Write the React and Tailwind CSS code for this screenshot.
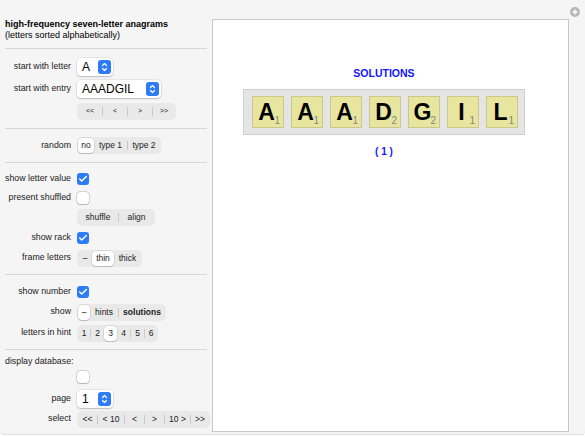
import { Check } from 'lucide-react'

const font = { fontFamily: '"Liberation Sans", Arial, sans-serif' }

function Row({ label, children, className = 'h-[20px]' }) {
  return (
    <div className={`flex items-center ${className}`}>
      <div className="w-[77px] shrink-0 pr-[6px] text-right text-[8.8px] text-[#222] whitespace-nowrap">{label}</div>
      <div className="flex items-center">{children}</div>
    </div>
  )
}

function Sep({ className = '' }) {
  return <div className={`h-px bg-[#d6d6d6] mx-[5px] ${className}`} />
}

function Popup({ value, width }) {
  return (
    <div
      className="flex items-center justify-between h-[18px] rounded-[4px] bg-white shadow-[0_0_0_0.5px_rgba(0,0,0,0.12),0_1px_1.5px_rgba(0,0,0,0.18)] pl-[5px] pr-[2px]"
      style={{ width }}
    >
      <span className="text-[12px] text-black leading-none">{value}</span>
      <div className="w-[13px] h-[14px] rounded-[3px] bg-[#2b7cf6] flex items-center justify-center">
        <svg width="7" height="10" viewBox="0 0 7 10" fill="none" stroke="white" strokeWidth="1.2" strokeLinecap="round" strokeLinejoin="round">
          <path d="M1.5 3.5 L3.5 1.5 L5.5 3.5" />
          <path d="M1.5 6.5 L3.5 8.5 L5.5 6.5" />
        </svg>
      </div>
    </div>
  )
}

function Seg({ items, selected, bold, widths, textSize = 'text-[8.5px]' }) {
  return (
    <div className="flex items-center h-[17px] rounded-[5px] bg-[#e9e9e9] px-[1px]">
      {items.map((it, i) => {
        const sel = i === selected
        const prevSel = i - 1 === selected
        return (
          <div key={i} className="flex items-center h-full">
            {i > 0 && !sel && !prevSel && <div className="w-px h-[9px] bg-[#c9c9c9]" />}
            <div
              className={`h-[15px] flex items-center justify-center ${textSize} text-[#222] rounded-[4px] ${
                sel ? 'bg-white shadow-[0_0_0_0.5px_rgba(0,0,0,0.15),0_1px_1px_rgba(0,0,0,0.15)]' : ''
              } ${bold === i ? 'font-bold' : ''}`}
              style={{ width: widths[i] }}
            >
              {it}
            </div>
          </div>
        )
      })}
    </div>
  )
}

function Box({ checked }) {
  return checked ? (
    <div className="w-[12px] h-[12px] rounded-[3px] bg-[#2b7cf6] flex items-center justify-center">
      <Check size={10} color="white" strokeWidth={3.5} />
    </div>
  ) : (
    <div className="w-[12px] h-[12px] rounded-[3px] bg-white shadow-[0_0_0_0.5px_rgba(0,0,0,0.25),0_0.5px_1px_rgba(0,0,0,0.15)]" />
  )
}

const tiles = [
  ['A', 1], ['A', 1], ['A', 1], ['D', 2], ['G', 2], ['I', 1], ['L', 1],
]

function Tile({ letter, value }) {
  return (
    <div className="relative w-[32px] h-[32px] bg-[#e8e69e] border border-[#cbc98a] flex items-center justify-center">
      <span className="text-[23px] font-bold text-black leading-none -ml-[3px] mt-[2px]">{letter}</span>
      <span className="absolute right-[3px] bottom-[1px] text-[10px] text-[#858585] leading-none">{value}</span>
    </div>
  )
}

export default function App() {
  return (
    <div className="w-[585px] h-[437px] bg-white" style={font}>
      <div className="relative w-[585px] h-[435px] bg-[#f5f5f5] border-b border-[#e2e2e2] rounded-b-[4px] flex">
        {/* controls */}
        <div className="w-[212px] shrink-0">
          <div className="pt-[19px] px-[5px] text-[9px] leading-[11px] text-black">
            <div className="font-bold">high-frequency seven-letter anagrams</div>
            <div>(letters sorted alphabetically)</div>
          </div>
          <Sep className="mt-[7px]" />

          <div className="mt-[8px] flex flex-col gap-[2px]">
            <Row label="start with letter">
              <Popup value="A" width={36} />
            </Row>
            <Row label="start with entry">
              <Popup value="AAADGIL" width={84} />
            </Row>
            <Row label="">
              <Seg items={['<<', '<', '>', '>>']} widths={[24, 24, 24, 22]} textSize="text-[7px]" />
            </Row>
          </div>
          <Sep className="mt-[7px]" />

          <div className="mt-[8px]">
            <Row label="random" className="h-[17px]">
              <Seg items={['no', 'type 1', 'type 2']} selected={0} widths={[16, 33, 32]} />
            </Row>
          </div>
          <Sep className="mt-[8px]" />

          <div className="mt-[7px] flex flex-col">
            <Row label="show letter value" className="h-[18px]">
              <Box checked />
            </Row>
            <Row label="present shuffled" className="h-[19px]">
              <Box />
            </Row>
            <Row label="" className="h-[21px]">
              <Seg items={['shuffle', 'align']} widths={[40, 35]} />
            </Row>
            <Row label="show rack" className="h-[20px]">
              <Box checked />
            </Row>
            <Row label="frame letters" className="h-[20px]">
              <Seg items={['–', 'thin', 'thick']} selected={1} widths={[14, 22, 27]} />
            </Row>
          </div>
          <Sep className="mt-[6px]" />

          <div className="mt-[8px] flex flex-col gap-[1px]">
            <Row label="show number" className="h-[18px]">
              <Box checked />
            </Row>
            <Row label="show" className="h-[20px]">
              <Seg items={['–', 'hints', 'solutions']} selected={0} bold={2} widths={[12, 28, 46]} />
            </Row>
            <Row label="letters in hint" className="h-[20px]">
              <Seg items={['1', '2', '3', '4', '5', '6']} selected={2} widths={[12, 13, 13, 13, 13, 12]} />
            </Row>
          </div>
          <Sep className="mt-[6px]" />

          <div className="px-[5px] mt-[6px] text-[8.8px] leading-[11px] text-[#222]">display database:</div>
          <div className="mt-[3px] flex flex-col">
            <Row label="" className="h-[14px]">
              <Box />
            </Row>
            <Row label="page" className="h-[20px] mt-[5px]">
              <Popup value="1" width={36} />
            </Row>
            <Row label="select" className="h-[18px] mt-[1px]">
              <Seg items={['<<', '< 10', '<', '>', '10 >', '>>']} widths={[19, 26, 19, 19, 25, 18]} />
            </Row>
          </div>
        </div>

        {/* output */}
        <div className="pt-[19px]">
          <div className="w-[357px] h-[413px] bg-white border border-[#c8c8c8]">
            <div className="ml-[30px] w-[282px] flex flex-col items-center">
              <div className="mt-[48px] text-[10.5px] font-bold text-[#1414ff] leading-none">SOLUTIONS</div>
              <div className="mt-[10px] w-[282px] h-[46px] bg-[#e5e5e5] border border-[#cfcfcf] flex items-center justify-center gap-[7px] pl-[2px]">
                {tiles.map(([l, v], i) => (
                  <Tile key={i} letter={l} value={v} />
                ))}
              </div>
              <div className="mt-[12px] text-[10px] font-bold text-[#1414ff] leading-none">( 1 )</div>
            </div>
          </div>
        </div>

        <div className="absolute right-[5px] top-[7px] w-[10px] h-[10px] rounded-full bg-[#b8b8b8] flex items-center justify-center">
          <svg width="6" height="6" viewBox="0 0 6 6" stroke="white" strokeWidth="1.3">
            <path d="M3 0.5 V5.5 M0.5 3 H5.5" />
          </svg>
        </div>
      </div>
    </div>
  )
}
